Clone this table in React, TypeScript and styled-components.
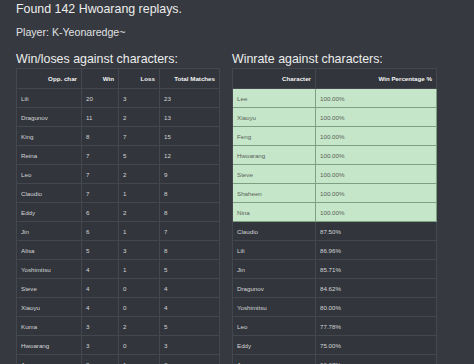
import styled, { createGlobalStyle } from 'styled-components';

const GlobalStyle = createGlobalStyle`
  html, body {
    margin: 0;
    padding: 0;
    background: #36393f;
    overflow: hidden;
    font-family: "Liberation Sans", Arial, sans-serif;
  }
`;

const Page = styled.div`
  padding: 2px 16px 0;
  color: #e4e5e7;
`;

const Title = styled.h1`
  margin: 0;
  font-size: 12.4px;
  line-height: 14px;
  font-weight: normal;
  color: #eceded;
`;

const PlayerLine = styled.h3`
  margin: 10px 0 0;
  font-size: 10.6px;
  line-height: 12px;
  font-weight: normal;
  color: #e0e1e3;
`;

const Columns = styled.div`
  display: grid;
  grid-template-columns: 204px 205px;
  column-gap: 12px;
  margin-top: 14px;
  align-items: start;
`;

const Section = styled.section`
  display: flex;
  flex-direction: column;
  gap: 2px;
`;

const SectionHeading = styled.h2`
  margin: 0;
  font-size: 12.4px;
  line-height: 14px;
  font-weight: normal;
  color: #eceded;
  white-space: nowrap;
`;

const Table = styled.table`
  border-collapse: separate;
  border-spacing: 0;
  width: 100%;
  table-layout: fixed;
  background: #32353b;
  border-top: 1px solid #44474e;
  border-left: 1px solid #44474e;
  font-size: 6.2px;
`;

const HeadCell = styled.th<{ $w?: number }>`
  width: ${(p) => (p.$w ? `${p.$w}px` : 'auto')};
  height: 19px;
  padding: 0 4px 0 0;
  text-align: right;
  font-weight: bold;
  color: #f4f4f5;
  border-right: 1px solid #44474e;
  border-bottom: 1px solid #44474e;
  white-space: nowrap;
`;

const Cell = styled.td<{ $good?: boolean }>`
  height: 18px;
  padding: 0 0 0 4px;
  text-align: left;
  white-space: nowrap;
  color: ${(p) => (p.$good ? '#5a5f5b' : '#d3d5d8')};
  background: ${(p) => (p.$good ? '#c5e6c8' : 'transparent')};
  border-right: 1px solid ${(p) => (p.$good ? '#7e9f82' : '#44474e')};
  border-bottom: 1px solid ${(p) => (p.$good ? '#7e9f82' : '#44474e')};
`;

const matches: [string, number, number][] = [
  ['Lili', 20, 3],
  ['Dragunov', 11, 2],
  ['King', 8, 7],
  ['Reina', 7, 5],
  ['Leo', 7, 2],
  ['Claudio', 7, 1],
  ['Eddy', 6, 2],
  ['Jin', 6, 1],
  ['Alisa', 5, 3],
  ['Yoshimitsu', 4, 1],
  ['Steve', 4, 0],
  ['Xiaoyu', 4, 0],
  ['Kuma', 3, 2],
  ['Hwoarang', 3, 0],
  ['Jun', 2, 1],
];

const winrates: [string, string][] = [
  ['Lee', '100.00%'],
  ['Xiaoyu', '100.00%'],
  ['Feng', '100.00%'],
  ['Hwoarang', '100.00%'],
  ['Steve', '100.00%'],
  ['Shaheen', '100.00%'],
  ['Nina', '100.00%'],
  ['Claudio', '87.50%'],
  ['Lili', '86.96%'],
  ['Jin', '85.71%'],
  ['Dragunov', '84.62%'],
  ['Yoshimitsu', '80.00%'],
  ['Leo', '77.78%'],
  ['Eddy', '75.00%'],
  ['Jun', '66.67%'],
];

const App = () => {
  return (
    <Page>
      <GlobalStyle />
      <Title>Found 142 Hwoarang replays.</Title>
      <PlayerLine>Player: K-Yeonaredge~</PlayerLine>
      <Columns>
        <Section>
          <SectionHeading>Win/loses against characters:</SectionHeading>
          <Table>
            <thead>
              <tr>
                <HeadCell $w={60}>Opp. char</HeadCell>
                <HeadCell $w={32}>Win</HeadCell>
                <HeadCell $w={36}>Loss</HeadCell>
                <HeadCell>Total Matches</HeadCell>
              </tr>
            </thead>
            <tbody>
              {matches.map(([name, win, loss]) => (
                <tr key={name}>
                  <Cell>{name}</Cell>
                  <Cell>{win}</Cell>
                  <Cell>{loss}</Cell>
                  <Cell>{win + loss}</Cell>
                </tr>
              ))}
            </tbody>
          </Table>
        </Section>
        <Section>
          <SectionHeading>Winrate against characters:</SectionHeading>
          <Table>
            <thead>
              <tr>
                <HeadCell $w={78}>Character</HeadCell>
                <HeadCell>Win Percentage %</HeadCell>
              </tr>
            </thead>
            <tbody>
              {winrates.map(([name, pct]) => {
                const good = pct === '100.00%';
                return (
                  <tr key={name}>
                    <Cell $good={good}>{name}</Cell>
                    <Cell $good={good}>{pct}</Cell>
                  </tr>
                );
              })}
            </tbody>
          </Table>
        </Section>
      </Columns>
    </Page>
  );
};

export default App;
